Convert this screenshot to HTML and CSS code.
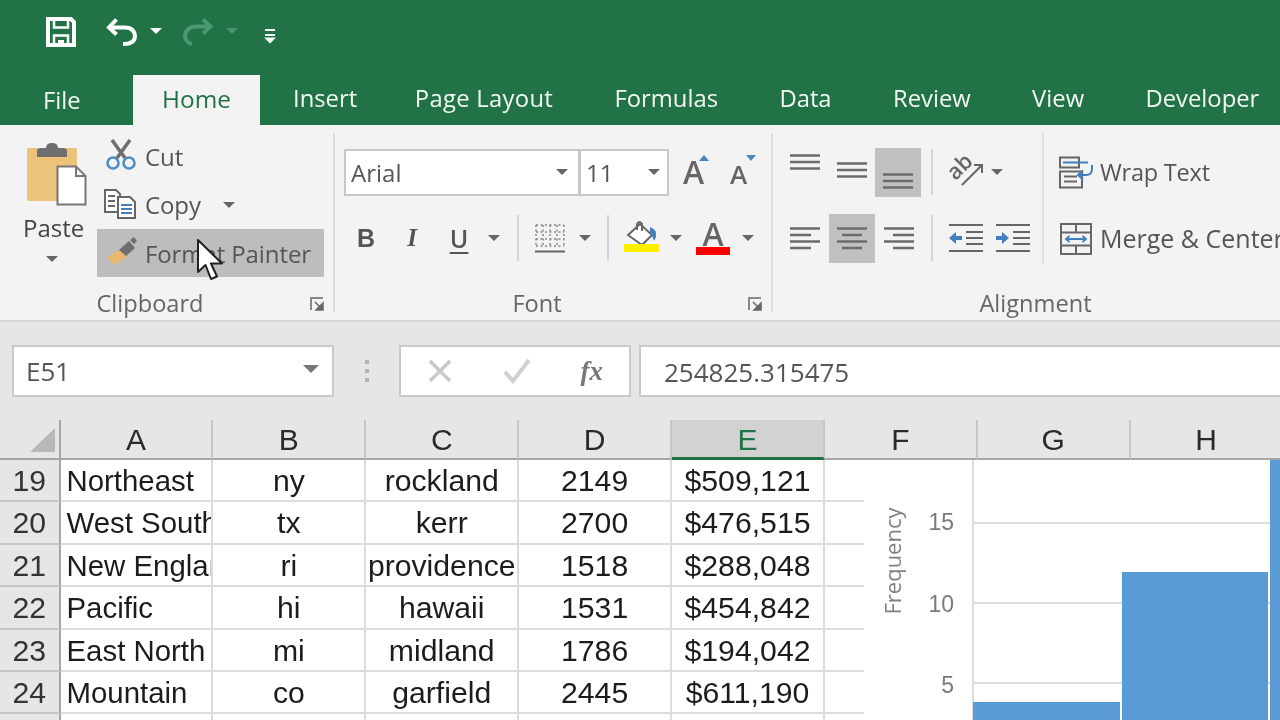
FILE: index.html
```html
<!DOCTYPE html>
<html lang="en">
<head>
<meta charset="utf-8">
<title>Excel</title>
<link rel="stylesheet" href="styles.css">
</head>
<body>
<div class="app">
  <header class="titlebar">
    <div class="qat">
      <svg class="ic-save" width="30" height="30" viewBox="0 0 30 30" fill="none" stroke="#fff" stroke-width="4"><path d="M2 2H25L28 5V28H2Z"/><path d="M8 3V10.500H22V3" stroke-width="2.500"/><path d="M8 27V18.500H22V27" stroke-width="2.500"/><path d="M12 29V23H18V29" fill="#fff" stroke="none"/></svg>
      <svg class="ic-undo" width="32" height="30" viewBox="0 0 32 30" fill="none" stroke="#fff" stroke-width="4"><path d="M10.500 2.500L3 10.500L10.500 17.500"/><path d="M3 10.500H19C26 10.500 29 15 29 19C29 24 25 27 17 27"/></svg>
      <svg class="tri-qat" width="12" height="6" viewBox="0 0 12 6"><path d="M0 0H12L6 6Z" fill="#fff"/></svg>
      <svg class="ic-redo" width="32" height="30" viewBox="0 0 32 30" fill="none" stroke="#4c9670" stroke-width="4"><path d="M21 1.500L28.500 8.500L21 15.500"/><path d="M28 8.500H15C7 8.500 3 13 3 18C3 22 6 25 10 26"/></svg>
      <svg class="tri-qat tri-off" width="12" height="6" viewBox="0 0 12 6"><path d="M0 0H12L6 6Z" fill="#4c9670"/></svg>
      <svg class="ic-more" width="12" height="15" viewBox="0 0 12 15"><path d="M1 1H11M1 6H11" stroke="#fff" stroke-width="2"/><path d="M0 8.500H12L6 14.500Z" fill="#fff"/></svg>
    </div>
    <nav class="tabs">
      <span class="tab tab-file">File</span>
      <span class="tab tab-home">Home</span>
      <span class="tab tab-insert">Insert</span>
      <span class="tab tab-page">Page Layout</span>
      <span class="tab">Formulas</span>
      <span class="tab">Data</span>
      <span class="tab">Review</span>
      <span class="tab">View</span>
      <span class="tab">Developer</span>
    </nav>
  </header>

  <section class="ribbon">
    <div class="group g-clip">
      <div class="clip-body">
        <div class="paste">
          <svg width="62" height="66" viewBox="0 0 62 66"><rect x="1" y="6" width="50" height="53" rx="2" fill="#edc27a"/><path d="M11 9Q11 6 15 6H20Q20 1 26 1Q32 1 32 6H37Q41 6 41 9V15H11Z" fill="#6f6f6f"/><path d="M31.500 24.500H50L59.500 34V62.500H31.500Z" fill="#fff" stroke="#777" stroke-width="2"/><path d="M50 25V34H59" fill="none" stroke="#777" stroke-width="2"/></svg>
          <span class="paste-label">Paste</span>
          <svg class="tri-paste" width="12" height="6" viewBox="0 0 12 6"><path d="M0 0H12L6 6Z" fill="#666"/></svg>
        </div>
        <div class="clip-cmds">
          <div class="cmd">
            <svg class="cmd-ic" width="40" height="48" viewBox="0 0 40 48" fill="none"><path d="M15 7L28 25M33 7L20 25" stroke="#6e6e6e" stroke-width="3.500"/><circle cx="16" cy="30" r="5.500" stroke="#4a8cc9" stroke-width="2.500"/><circle cx="32" cy="30" r="5.500" stroke="#4a8cc9" stroke-width="2.500"/></svg>
            <span>Cut</span>
          </div>
          <div class="cmd">
            <svg class="cmd-ic" width="40" height="48" viewBox="0 0 40 48" fill="none" stroke="#666" stroke-width="2"><path d="M8 9H19L23 13V31H8Z" fill="#fff"/><path d="M11 15H18M11 20H18M11 25H18" stroke-width="1.800"/><path d="M21 16H33L38 21V37H21Z" fill="#fff"/><path d="M24 24H35M24 28H35M24 32H35" stroke="#4a7fb5" stroke-width="1.800"/></svg>
            <span>Copy</span>
            <svg class="tri-copy" width="12" height="6" viewBox="0 0 12 6"><path d="M0 0H12L6 6Z" fill="#666"/></svg>
          </div>
          <div class="cmd cmd-on">
            <svg class="cmd-ic" width="40" height="48" viewBox="0 0 40 48"><path d="M10 28L24 20L30 28L17 36Z" fill="#e9b872"/><path d="M22 21L32 12L38 19L29 27Z" fill="#6e6e6e"/><path d="M33 11L37 8L40 12L37 15Z" fill="#6e6e6e"/></svg>
            <span>Format Painter</span>
          </div>
        </div>
      </div>
      <div class="glabel gl-clip">Clipboard</div>
      <svg class="launcher" width="14" height="14" viewBox="0 0 14 14" fill="none"><path d="M13 1H1V13" stroke="#888" stroke-width="2"/><path d="M5 5L11 11M13 6V13H6Z" stroke="#666" fill="#666" stroke-width="1.500"/></svg>
    </div>

    <div class="group g-font">
      <div class="rows">
        <div class="row">
          <div class="combo combo-font"><span>Arial</span><i class="tri-combo"></i></div>
          <div class="combo combo-size"><span>11</span><i class="tri-combo"></i></div>
          <div class="fa fa-grow"><span>A</span><i class="tri-up"></i></div>
          <div class="fa fa-shrink"><span>A</span><i class="tri-dn"></i></div>
        </div>
        <div class="row">
          <b class="fbtn fb-b">B</b>
          <i class="fbtn fb-i">I</i>
          <span class="fbtn fb-u">U</span>
          <i class="tri-sm tri-u"></i>
          <span class="vsep vs-1"></span>
          <svg class="ic-borders" width="32" height="32" viewBox="0 0 32 32" fill="none"><path d="M2 3H30M2 10H30M2 17H30M2 24H30M2 3V24M9 3V24M16 3V24M23 3V24M30 3V24" stroke="#888" stroke-width="1.500" stroke-dasharray="2 2.500"/><path d="M1 29.500H31" stroke="#666" stroke-width="2"/></svg>
          <i class="tri-sm tri-b"></i>
          <span class="vsep vs-2"></span>
          <svg class="ic-fill" width="36" height="34" viewBox="0 0 36 34" fill="none"><path d="M5 14L17 3L29 14L19 24Z" fill="#fff" stroke="#666" stroke-width="2"/><path d="M14 9V3Q17 -1 19 3V10" stroke="#666" stroke-width="2"/><path d="M27 6Q34 8 33 16L31 20Q29 14 27 12Z" fill="#3f7fbf"/><rect x="1" y="23" width="35" height="8" fill="#ffef00"/></svg>
          <i class="tri-sm tri-f"></i>
          <div class="fcolor"><span>A</span></div>
          <i class="tri-sm tri-c"></i>
        </div>
      </div>
      <div class="glabel gl-font">Font</div>
      <svg class="launcher" width="14" height="14" viewBox="0 0 14 14" fill="none"><path d="M13 1H1V13" stroke="#888" stroke-width="2"/><path d="M5 5L11 11M13 6V13H6Z" stroke="#666" fill="#666" stroke-width="1.500"/></svg>
    </div>

    <div class="group g-align">
      <div class="al-body">
        <div class="al-left">
          <div class="row">
            <svg class="al" width="46" height="48" viewBox="0 0 46 48"><path class="ln" d="M7 7.500H37M7 14H37M7 20.500H37"/></svg>
            <svg class="al" width="46" height="48" viewBox="0 0 46 48"><path class="ln" d="M8 15.500H38M8 22H38M8 28.500H38"/></svg>
            <svg class="al al-on" width="46" height="49" viewBox="0 0 46 49"><path class="ln" d="M8 26.500H38M8 33H38M8 39.500H38"/></svg>
            <span class="vsep vs-a"></span>
            <svg class="ic-orient" width="38" height="36" viewBox="0 0 38 36" fill="none"><text x="13" y="20" transform="rotate(-45 13 13)" class="ab">ab</text><path d="M15 31L34 12M27 11H35V19" stroke="#666" stroke-width="2"/></svg>
            <i class="tri-sm tri-o"></i>
          </div>
          <div class="row">
            <svg class="al" width="46" height="49" viewBox="0 0 46 49"><path class="ln" d="M7 14.500H37M7 21H28M7 27.500H37M7 34H28"/></svg>
            <svg class="al al-on" width="46" height="49" viewBox="0 0 46 49"><path class="ln" d="M8 14.500H38M13 21H33M8 27.500H38M13 34H33"/></svg>
            <svg class="al" width="46" height="49" viewBox="0 0 46 49"><path class="ln" d="M9 14.500H39M18 21H39M9 27.500H39M18 34H39"/></svg>
            <span class="vsep vs-a"></span>
            <svg class="ic-indent" width="36" height="30" viewBox="0 0 36 30" fill="none"><path d="M1 2H35M1 28H35M18 9H35M18 15H35M18 21H35" stroke="#666" stroke-width="2"/><path d="M14 13V17H8V21L1 15L8 9V13Z" fill="#3f7fbf"/></svg>
            <svg class="ic-indent2" width="36" height="30" viewBox="0 0 36 30" fill="none"><path d="M1 2H35M1 28H35M18 9H35M18 15H35M18 21H35" stroke="#666" stroke-width="2"/><path d="M1 13V17H7V21L14 15L7 9V13Z" fill="#3f7fbf"/></svg>
          </div>
        </div>
        <div class="al-right">
          <div class="row al-cmd">
            <svg class="al-cmd-ic" width="36" height="33" viewBox="0 0 36 33" fill="none"><path d="M1 1.500H20V11.500H1Z" stroke="#666" stroke-width="2"/><path d="M4 6.500H29" stroke="#3f7fbf" stroke-width="2"/><path d="M1 15.500H23V31.500H1ZM5 20.500H18M5 25.500H18" stroke="#666" stroke-width="2"/><path d="M33 9V13Q33 19 27 19H20M24 14.500L19 19L24 23.500" stroke="#3f7fbf" stroke-width="2"/></svg>
            <span class="t-wrap">Wrap Text</span>
          </div>
          <div class="row al-cmd">
            <svg class="al-cmd-ic" width="36" height="33" viewBox="0 0 36 33" fill="none"><path d="M2 2H32V32H2ZM2 10.500H32M2 23.500H32M17 2V10.500M17 23.500V32" stroke="#666" stroke-width="2"/><path d="M7 17H27M10.500 14L7 17L10.500 20M23.500 14L27 17L23.500 20" stroke="#3f7fbf" stroke-width="1.800"/></svg>
            <span class="t-merge">Merge &amp; Center</span>
          </div>
        </div>
      </div>
      <div class="glabel gl-align">Alignment</div>
    </div>
  </section>

  <section class="fbar">
    <div class="namebox"><span>E51</span><i class="tri-name"></i></div>
    <div class="grip"><i></i><i></i><i></i></div>
    <div class="fxbox">
      <svg width="26" height="26" viewBox="0 0 26 26" fill="none"><path d="M3 3L23 23M23 3L3 23" stroke="#c9c9c9" stroke-width="3.500"/></svg>
      <svg width="30" height="26" viewBox="0 0 30 26" fill="none"><path d="M3 14L11 23L27 2" stroke="#d0d0d0" stroke-width="4"/></svg>
      <span class="fx">fx</span>
    </div>
    <div class="finput">254825.315475</div>
  </section>

  <section class="sheet">
    <div class="grid">
      <div class="hd corner"><i></i></div>
      <div class="hd">A</div><div class="hd">B</div><div class="hd">C</div><div class="hd">D</div><div class="hd hd-on">E</div><div class="hd">F</div><div class="hd">G</div><div class="hd">H</div>

      <div class="rh">19</div><div class="c c-l">Northeast</div><div class="c">ny</div><div class="c">rockland</div><div class="c">2149</div><div class="c">$509,121</div><div class="c"></div><div class="c"></div><div class="c"></div>
      <div class="rh">20</div><div class="c c-l">West South Central</div><div class="c">tx</div><div class="c">kerr</div><div class="c">2700</div><div class="c">$476,515</div><div class="c"></div><div class="c"></div><div class="c"></div>
      <div class="rh">21</div><div class="c c-l">New England</div><div class="c">ri</div><div class="c">providence</div><div class="c">1518</div><div class="c">$288,048</div><div class="c"></div><div class="c"></div><div class="c"></div>
      <div class="rh">22</div><div class="c c-l">Pacific</div><div class="c">hi</div><div class="c">hawaii</div><div class="c">1531</div><div class="c">$454,842</div><div class="c"></div><div class="c"></div><div class="c"></div>
      <div class="rh">23</div><div class="c c-l">East North Central</div><div class="c">mi</div><div class="c">midland</div><div class="c">1786</div><div class="c">$194,042</div><div class="c"></div><div class="c"></div><div class="c"></div>
      <div class="rh">24</div><div class="c c-l">Mountain</div><div class="c">co</div><div class="c">garfield</div><div class="c">2445</div><div class="c">$611,190</div><div class="c"></div><div class="c"></div><div class="c"></div>
      <div class="rh"></div><div class="c"></div><div class="c"></div><div class="c"></div><div class="c"></div><div class="c"></div><div class="c"></div><div class="c"></div><div class="c"></div>
    </div>
    <svg class="chart" width="416" height="260" viewBox="0 0 416 260">
      <path d="M109 63H406M109 143H406M109 223H406" stroke="#dcdcdc" stroke-width="2"/>
      <path d="M109 0V260" stroke="#dcdcdc" stroke-width="2"/>
      <rect x="109" y="242" width="147" height="18" fill="#5b9bd5"/>
      <rect x="258" y="112" width="146" height="148" fill="#5b9bd5"/>
      <rect x="406" y="0" width="10" height="260" fill="#5b9bd5"/>
      <text x="90" y="70" class="tick">15</text>
      <text x="90" y="152" class="tick">10</text>
      <text x="90" y="233" class="tick">5</text>
      <text class="axis" transform="translate(37 101) rotate(-90)">Frequency</text>
    </svg>
  </section>

  <svg class="cursor" width="28" height="42" viewBox="0 0 28 42"><path d="M2 1V33L9.500 26L15 40L21 37.500L15 24.500H26Z" fill="#fff" stroke="#222" stroke-width="2" stroke-linejoin="round"/></svg>
</div>
</body>
</html>
```
FILE: styles.css
```css
* { box-sizing: border-box; }
html, body { margin: 0; height: 100%; }
body { overflow: hidden; background: #e6e6e6; }
.app {
  position: relative;
  width: 1280px;
  height: 720px;
  overflow: hidden;
  display: flex;
  flex-direction: column;
  font-family: "Open Sans", "Noto Sans", sans-serif;
  color: #444;
  filter: blur(0.5px);
}
svg { display: block; flex: none; }
i { font-style: normal; display: block; }

/* title bar */
.titlebar { height: 125px; background: #217346; display: flex; flex-direction: column; flex: none; }
.qat { height: 75px; padding: 17px 0 0 46px; display: flex; align-items: flex-start; }
.ic-undo { margin-left: 30px; }
.tri-qat { margin: 11px 0 0 12px; }
.ic-redo { margin: 1px 0 0 20px; }
.tri-off { margin-left: 12px; opacity: .9; }
.ic-more { margin: 12px 0 0 26px; }
.tabs { height: 50px; display: flex; align-items: stretch; color: #fff; font-size: 23.800px; white-space: nowrap; }
.tab { flex: none; padding: 7px 30.700px 0; color: #f4f8f5; }
.tab-file { padding: 9px 0 0 43px; width: 133px; }
.tab-home { width: 127px; padding: 7px 0 0; text-align: center; background: #f3f3f3; color: #217346; font-size: 24.400px; }
.tab-insert { padding-left: 33px; padding-right: 27px; }
.tab-page { letter-spacing: 0.3px; }

/* ribbon */
.ribbon {
  height: 197px;
  flex: none;
  background: #f3f3f3;
  border-bottom: 2px solid #d6d6d6;
  display: flex;
  padding-top: 8px;
  font-size: 24px;
}
.group { position: relative; height: 179px; border-right: 2px solid #dcdcdc; display: flex; flex-direction: column; justify-content: space-between; flex: none; }
.g-clip { width: 335px; }
.g-font { width: 438px; padding-left: 9px; }
.g-align { flex: 1; border-right: 0; padding-left: 10px; }
.glabel { height: 30px; font-size: 23.600px; line-height: 42px; color: #666; text-align: center; }
.gl-clip { width: 300px; }
.gl-font { width: 386px; }
.gl-align { width: 505px; }
.launcher { position: absolute; right: 9px; bottom: 1px; }

.clip-body { display: flex; }
.paste { width: 97px; padding: 9px 0 0 26px; display: flex; flex-direction: column; }
.paste-label { margin: 6px 0 0 -3px; line-height: 28px; }
.tri-paste { margin: 14px 0 0 20px; }
.clip-cmds { width: 227px; display: flex; flex-direction: column; }
.cmd { height: 48px; display: flex; align-items: center; }
.cmd span { margin: 0 0 2px 8px; color: #555; letter-spacing: -0.1px; }
.cmd-on { background: #bdbdbd; }
.cmd-on span { color: #555; margin-bottom: 0; }
.tri-copy { margin-left: 22px; }

/* rows */
.rows { display: flex; flex-direction: column; gap: 18px; padding-top: 15px; }
.row { display: flex; align-items: center; height: 48px; }
.combo { height: 47px; background: #fff; border: 2px solid #c8c8c8; display: flex; align-items: center; justify-content: space-between; padding: 0 9px 0 5px; color: #555; }
.combo-font { width: 234px; border-right: 0; padding-right: 10px; }
.combo-size { width: 91px; padding-right: 7px; border-left-width: 3px; }
.tri-combo, .tri-name { width: 0; height: 0; border-left: 6px solid transparent; border-right: 6px solid transparent; border-top: 6px solid #666; }
.fa { position: relative; font-size: 32px; font-weight: 600; color: #666; line-height: 1; }
.fa-grow { margin-left: 14px; width: 26px; }
.fa-shrink { margin-left: 21px; width: 26px; font-size: 26px; padding-top: 3px; }
.tri-up, .tri-dn { position: absolute; width: 0; height: 0; border-left: 5px solid transparent; border-right: 5px solid transparent; }
.tri-up { border-bottom: 6px solid #4a86bd; right: 0; top: -1px; }
.tri-dn { border-top: 6px solid #4a86bd; right: 0; top: -3px; }
.fbtn { font-size: 25px; color: #555; width: 46px; text-align: center; }
.fb-b { margin-left: -1px; font-style: normal; font-weight: 700; font-family: "Liberation Sans", sans-serif; }
.fb-i { font-family: "Liberation Serif", serif; font-weight: 700; font-style: italic; }
.fb-u { text-decoration: underline; text-underline-offset: 4px; font-weight: 600; margin-left: 1px; }
.tri-sm { width: 0; height: 0; border-left: 6px solid transparent; border-right: 6px solid transparent; border-top: 6px solid #666; }
.tri-u { margin-left: 6px; }
.vsep { width: 2px; height: 46px; background: #d4d4d4; flex: none; }
.vs-1 { margin-left: 17px; }
.ic-borders { margin-left: 15px; }
.tri-b { margin-left: 13px; }
.vs-2 { margin-left: 16px; }
.ic-fill { margin-left: 14px; }
.tri-f { margin-left: 11px; }
.fcolor { margin-left: 14px; width: 34px; text-align: center; border-bottom: 8px solid #f00; font-size: 32px; font-weight: 600; line-height: 26px; color: #666; height: 34px; overflow: visible; }
.tri-c { margin-left: 12px; }

/* alignment */
.al-body { display: flex; }
.al-left { width: 261px; height: 131px; padding-top: 15px; display: flex; flex-direction: column; gap: 18px; border-right: 2px solid #e2e2e2; }
.al-right { padding: 15px 0 0 15px; display: flex; flex-direction: column; gap: 18px; }
.al { flex: none; }
.al-on { background: #c0c0c0; }
.ln { stroke: #6b6b6b; stroke-width: 2.400; fill: none; }
.vs-a { margin-left: 10px; }
.ic-orient { margin-left: 14px; }
.ab { font-family: "Open Sans", sans-serif; font-size: 22px; font-weight: 600; fill: #666; text-anchor: middle; }
.tri-o { margin-left: 6px; }
.ic-indent { margin-left: 15px; }
.ic-indent2 { margin-left: 11px; }
.al-cmd span { margin-left: 5px; color: #555; white-space: nowrap; }
.t-wrap { font-size: 23.500px; letter-spacing: -0.2px; }
.t-merge { font-size: 25px; }

/* formula bar */
.fbar { height: 98px; flex: none; padding: 23px 0 0 12px; display: flex; align-items: flex-start; background: #e6e6e6; }
.namebox { width: 322px; height: 52px; background: #fff; border: 2px solid #c9c9c9; display: flex; align-items: center; justify-content: space-between; padding: 0 13px 0 12px; font-size: 26px; color: #555; }
.tri-name { border-left-width: 8px; border-right-width: 8px; border-top-width: 8px; border-top-color: #777; margin-bottom: 5px; }
.grip { width: 65px; height: 52px; display: flex; flex-direction: column; align-items: center; justify-content: center; gap: 5px; }
.grip i { width: 4px; height: 4px; background: #b4b4b4; }
.fxbox { width: 232px; height: 52px; background: #fff; border: 2px solid #c9c9c9; display: flex; align-items: center; justify-content: space-between; padding: 0 26px; }
.fx { font-family: "Liberation Serif", serif; font-style: italic; font-weight: 700; font-size: 27px; color: #777; }
.finput { margin-left: 8px; flex: 1; height: 52px; background: #fff; border: 2px solid #c9c9c9; border-right: 0; padding-left: 23px; font-size: 26px; line-height: 50px; color: #555; }

/* sheet */
.sheet { position: relative; flex: 1; overflow: hidden; font-family: "Liberation Sans", Arial, sans-serif; }
.grid { display: grid; grid-template-columns: 60.500px repeat(8, 152.9px); grid-template-rows: 40px repeat(7, 42.4px); background: #fff; }
.hd { background: #e6e6e6; font-size: 30px; line-height: 40px; text-align: center; color: #2a2a2a; border-bottom: 2px solid #a6a6a6; border-right: 2px solid #c6c6c6; }
.hd.corner { position: relative; border-right: 2px solid #a6a6a6; }
.corner i { position: absolute; left: 30px; top: 8px; border-left: 25px solid transparent; border-bottom: 24px solid #b8b8b8; }
.hd-on { background: #d2d2d2; color: #217346; border-bottom: 3px solid #217346; }
.rh { background: #e6e6e6; font-size: 30.200px; line-height: 42px; text-align: center; color: #333; border-right: 2px solid #a6a6a6; border-bottom: 2px solid #c6c6c6; }
.c { background: #fff; font-size: 30.200px; line-height: 42px; text-align: center; white-space: nowrap; overflow: hidden; color: #1c1c1c; border-right: 2px solid #dcdcdc; border-bottom: 2px solid #dcdcdc; }
.c-l { text-align: left; padding-left: 6px; font-size: 29.400px; }
.chart { position: absolute; left: 864px; top: 40px; background: #fff; }
.tick { font-family: "Liberation Sans", sans-serif; font-size: 23px; fill: #7a7a7a; text-anchor: end; }
.axis { font-family: "Open Sans", sans-serif; font-size: 22px; fill: #808080; text-anchor: middle; }
.cursor { position: absolute; left: 196px; top: 239px; }
```
